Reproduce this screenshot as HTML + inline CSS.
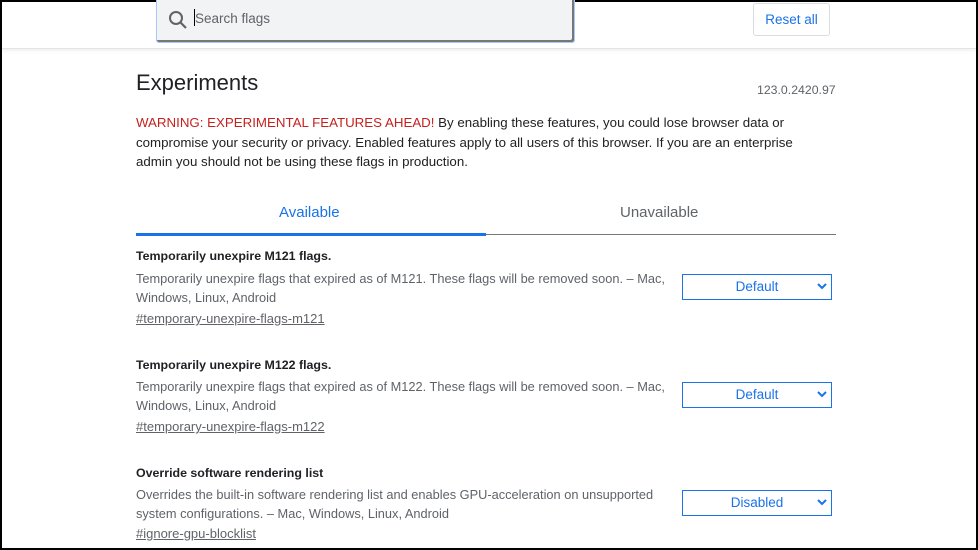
<!DOCTYPE html>
<html><head><meta charset="utf-8"><style>
*{margin:0;padding:0;box-sizing:border-box}
html,body{width:978px;height:550px;overflow:hidden;background:#fff}
body{position:relative;font-family:"Liberation Sans",Arial,sans-serif;border:2px solid #000}
.a{position:absolute;white-space:nowrap}
.hdr{position:absolute;left:0;top:0;width:974px;height:47px;background:#fff;border-bottom:1px solid #e4e4e4;box-shadow:0 2px 3px rgba(0,0,0,.06)}
.search{position:absolute;left:154px;top:-2px;width:419px;height:43px;background:#f1f3f4;border:1px solid #a8c7fa;border-top:none;box-shadow:inset -2px -2px 0 #777;border-radius:0 0 3px 3px}
.reset{position:absolute;left:751px;top:1px;width:77px;height:33px;border:1px solid #dadce0;border-radius:3px;color:#1a73e8;font-size:13.5px;text-align:center;line-height:31px}
.t{font-size:12.4px;font-weight:bold;color:#202124}
.d{font-size:12.8px;color:#5f6368;line-height:19px}
.l{font-size:13px;color:#5f6368;text-decoration:underline}
.sel{position:absolute;left:680px;width:150px;height:26px;border:1px solid #1a73e8;color:#1a73e8;font-size:13.5px;text-align:center;line-height:24px}
.sel svg{position:absolute;right:4px;top:8px}
</style></head><body>
<div class="hdr"></div>
<div class="search">
<svg style="position:absolute;left:11px;top:10px" width="20" height="20" viewBox="0 0 20 20"><circle cx="8" cy="8" r="6" fill="none" stroke="#5f6368" stroke-width="2"/><path d="M12.5 12.5L18 18" stroke="#5f6368" stroke-width="2.2"/></svg>
<div class="a" style="left:37px;top:9px;width:1px;height:17px;background:#000"></div>
<div class="a" style="left:38px;top:11px;font-size:13.5px;color:#5f6368">Search flags</div>
</div>
<div class="reset">Reset all</div>
<div class="a" style="left:134px;top:68px;font-size:22px;color:#202124">Experiments</div>
<div class="a" style="left:755px;top:81px;font-size:12.3px;color:#5f6368">123.0.2420.97</div>
<div class="a" style="left:134px;top:111px;font-size:13.3px;line-height:19.5px;color:#202124"><span style="color:#c5221f">WARNING: EXPERIMENTAL FEATURES AHEAD!</span> By enabling these features, you could lose browser data or<br>compromise your security or privacy. Enabled features apply to all users of this browser. If you are an enterprise<br>admin you should not be using these flags in production.</div>
<div class="a" style="left:277px;top:202px;font-size:15px;color:#1a73e8">Available</div>
<div class="a" style="left:618px;top:202px;font-size:15px;color:#5f6368">Unavailable</div>
<div class="a" style="left:134px;top:232px;width:700px;height:1px;background:#777"></div>
<div class="a" style="left:134px;top:231px;width:350px;height:3px;background:#1a73e8"></div>

<div class="a t" style="left:134px;top:247px">Temporarily unexpire M121 flags.</div>
<div class="a d" style="left:134px;top:267px">Temporarily unexpire flags that expired as of M121. These flags will be removed soon. – Mac,<br>Windows, Linux, Android</div>
<div class="a l" style="left:134px;top:309px">#temporary-unexpire-flags-m121</div>
<div class="sel" style="top:272px">Default<svg width="10" height="7" viewBox="0 0 10 7"><path d="M1 1l4 4 4-4" fill="none" stroke="#1a73e8" stroke-width="2"/></svg></div>

<div class="a t" style="left:134px;top:356px">Temporarily unexpire M122 flags.</div>
<div class="a d" style="left:134px;top:375px">Temporarily unexpire flags that expired as of M122. These flags will be removed soon. – Mac,<br>Windows, Linux, Android</div>
<div class="a l" style="left:134px;top:417px">#temporary-unexpire-flags-m122</div>
<div class="sel" style="top:380px">Default<svg width="10" height="7" viewBox="0 0 10 7"><path d="M1 1l4 4 4-4" fill="none" stroke="#1a73e8" stroke-width="2"/></svg></div>

<div class="a t" style="left:134px;top:464px">Override software rendering list</div>
<div class="a d" style="left:134px;top:483px">Overrides the built-in software rendering list and enables GPU-acceleration on unsupported<br>system configurations. – Mac, Windows, Linux, Android</div>
<div class="a l" style="left:134px;top:524px">#ignore-gpu-blocklist</div>
<div class="sel" style="top:488px">Disabled<svg width="10" height="7" viewBox="0 0 10 7"><path d="M1 1l4 4 4-4" fill="none" stroke="#1a73e8" stroke-width="2"/></svg></div>
</body></html>
